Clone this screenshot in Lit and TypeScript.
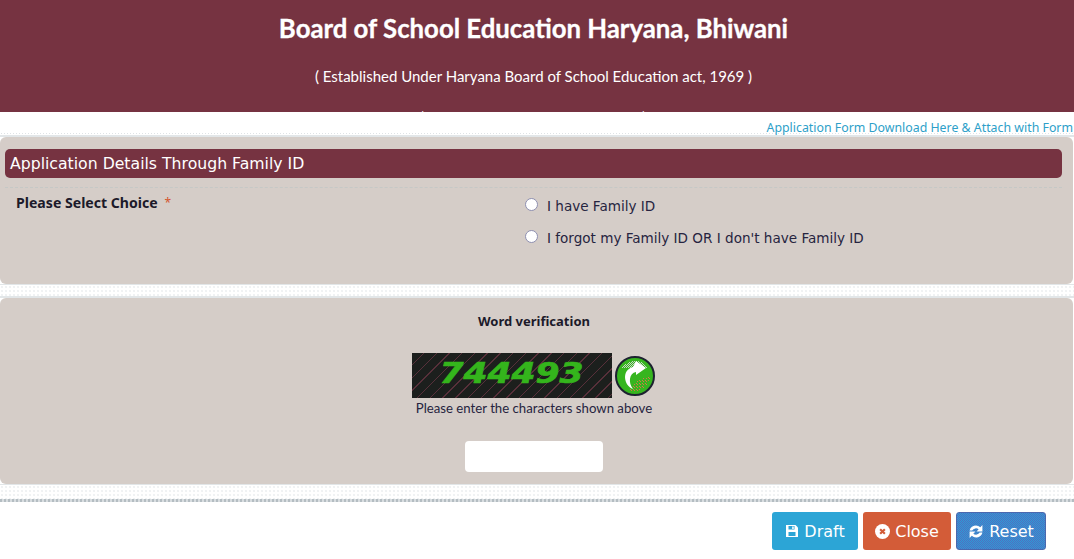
import { LitElement, html, css } from "lit";
import { customElement } from "lit/decorators.js";

@customElement("app-root")
export class AppRoot extends LitElement {
  static styles = css`
    :host { display: block; width: 1074px; height: 559px; overflow: hidden; background: #fff; font-family: "DejaVu Sans", sans-serif; color: #262440; }
    .hero { height: 112px; overflow: hidden; background: #763341; color: #fff; text-align: center; font-family: "Lato", "Noto Sans", sans-serif; padding-right: 7px; box-sizing: border-box; }
    .hero h1 { margin: 0; padding-top: 12px; font-size: 25.75px; line-height: 32px; font-weight: 700; -webkit-text-stroke: 0.3px #fff; }
    .hero p { margin: 0; padding-top: 22px; font-size: 15px; line-height: 20px; }
    .hero p + p { padding-top: 21px; letter-spacing: 0.9px; }
    .link { height: 25px; box-sizing: border-box; padding: 6px 1px 0 0; text-align: right; font-family: "Noto Sans", sans-serif; font-size: 12.35px; line-height: 20px; color: #2e9fc9;
      background-color: #fff; background-image: radial-gradient(circle, #dfe3e6 0.8px, transparent 1px); background-size: 3px 3px; background-repeat: repeat-x; background-position: 0 bottom; border-bottom: 2px solid #e2e6e8; }
    .panel { margin: 0 1px 0 0; background: #d5cdc8; border-radius: 6px; }
    .first { height: 147px; padding: 12px 11px 0 5px; box-sizing: border-box; }
    .title { height: 29px; background: #763341; border-radius: 5px; color: #fff; font-size: 15.7px; line-height: 29px; padding-left: 5px; }
    .rule { border-top: 1px dashed #c5c8c6; margin-top: 9px; }
    .row { display: grid; grid-template-columns: 509px 1fr; padding: 7px 0 0 11px; }
    .lbl { font-family: "Noto Sans", sans-serif; font-size: 14.1px; font-weight: 700; color: #1c1a2a; line-height: 17px; margin-top: -1px; }
    .lbl span { color: #d4562f; margin-left: 3px; font-weight: 400; font-size: 12px; vertical-align: 1px; }
    .opts { display: flex; flex-direction: column; gap: 15px; padding-top: 3px; }
    .opt { display: flex; align-items: center; gap: 9px; font-size: 13.55px; line-height: 17px; }
    .radio { width: 13px; height: 13px; border-radius: 50%; background: #fff; border: 1px solid #8e8fb0; box-sizing: border-box; margin-top: -4px; }
    .strip { height: 14px; background-color: #fff; background-image: radial-gradient(circle, #dfe3e6 0.6px, transparent 0.8px); background-size: 4px 4px; border-top: 1px solid #e2e6e8; border-bottom: 2px solid #e2e6e8; box-sizing: border-box; }
    .second { height: 186px; display: flex; flex-direction: column; align-items: center; box-sizing: border-box; padding: 15px 5px 0 0; }
    .wv { font-family: "Noto Sans", sans-serif; font-size: 13px; font-weight: 700; color: #1c1a2a; line-height: 17px; }
    .cap { display: flex; align-items: center; gap: 3px; margin: 23px 2px 0 0; }
    .img { width: 200px; height: 45px; display: flex; justify-content: center; background-color: #1c1f1d; background-image: repeating-linear-gradient(135deg, transparent 0 8px, #57303a 8px 9px); color: #34b51c; font-weight: 700; font-style: italic; font-size: 29px; line-height: 41px; -webkit-text-stroke: 0.7px #34b51c; }
    .img span { display: block; transform: scaleX(1.19); }
    .hint { font-family: "Lato", "Noto Sans", sans-serif; font-size: 13.2px; line-height: 16px; margin-top: 2px; }
    .input { width: 138px; height: 31px; margin-top: 25px; background: #fff; border-radius: 4px; }
    .strip2 { height: 15px; border-bottom: 0; }
    .strip2b { height: 3px; background: repeating-linear-gradient(90deg, #b4bdc2 0 2px, #d8dde0 2px 4px); }
    .foot { display: flex; justify-content: flex-end; gap: 5px; padding: 10px 28px 0 0; }
    .btn { height: 38px; box-sizing: border-box; display: flex; align-items: center; justify-content: center; gap: 5px; color: #fff; border-radius: 3px; font-size: 16px; }
    .draft { width: 86px; background: #2ca5d6; }
    .close { width: 88px; background: #d35c38; }
    .reset { width: 90px; background: repeating-conic-gradient(#2f9ad6 0 25%, #4f70c0 0 50%) 0 0 / 2px 2px; border: 1px solid #4a68ae; }
    svg { display: block; }
  `;
  render() {
    return html`
      <header class="hero">
        <h1>Board of School Education Haryana, Bhiwani</h1>
        <p>( Established Under Haryana Board of School Education act, 1969 )</p>
        <p>( An ISO 9001:2015 Certified )</p>
      </header>
      <div class="link">Application Form Download Here &amp; Attach with Form</div>
      <section class="panel first">
        <div class="title">Application Details Through Family ID</div>
        <div class="rule"></div>
        <div class="row">
          <div class="lbl">Please Select Choice <span>*</span></div>
          <div class="opts">
            <div class="opt"><i class="radio"></i>I have Family ID</div>
            <div class="opt"><i class="radio"></i>I forgot my Family ID OR I don't have Family ID</div>
          </div>
        </div>
      </section>
      <div class="strip"></div>
      <section class="panel second">
        <div class="wv">Word verification</div>
        <div class="cap">
          <div class="img"><span>744493</span></div>
          <svg width="40" height="40" viewBox="0 0 40 40" shape-rendering="crispEdges">
            <defs>
              <pattern id="dots" width="3" height="3" patternUnits="userSpaceOnUse"><rect width="1" height="1" fill="#d8744a"/><rect x="1" y="1" width="1" height="1" fill="#d8744a"/></pattern>
              <pattern id="grey" width="2" height="2" patternUnits="userSpaceOnUse"><rect width="1" height="1" fill="#c4d2c4"/><rect x="1" y="1" width="1" height="1" fill="#c4d2c4"/></pattern>
            </defs>
            <circle cx="20" cy="20" r="19" fill="#36b51f" stroke="#1d2230" stroke-width="2" shape-rendering="auto"/>
            <path d="M7 12a15.500 15.500 0 0 1 26 0z" fill="url(#grey)"/>
            <path d="M14 34a15.500 15.500 0 0 0 21-14l-9 3-7 5z" fill="url(#dots)"/>
            <path d="M18 33C9 30 6 14 18 11L21 5L31 12L21 19V16C14 17 13 27 18 33z" fill="#fff" shape-rendering="auto"/>
          </svg>
        </div>
        <div class="hint">Please enter the characters shown above</div>
        <div class="input"></div>
      </section>
      <div class="strip strip2"></div>
      <div class="strip2b"></div>
      <footer class="foot">
        <div class="btn draft">
          <svg width="14" height="14" viewBox="0 0 14 14"><path d="M1 1h9.500L13 3.500V13H1z" fill="#fff"/><path d="M3.500 2h6v3.500h-6zM3.500 8h7v4h-7z" fill="#2ca5d6"/><path d="M7.200 2.500h1.500v2.500H7.200z" fill="#fff"/></svg>Draft
        </div>
        <div class="btn close">
          <svg width="15" height="15" viewBox="0 0 14 14"><circle cx="7" cy="7" r="7" fill="#fff"/><path d="M4.800 4.800l4.400 4.400M9.200 4.800l-4.400 4.400" stroke="#d35c38" stroke-width="2"/></svg>Close
        </div>
        <div class="btn reset">
          <svg width="16" height="15" viewBox="0 0 15 14"><path d="M1.500 6a6 6 0 0 1 10-3L13.500 1V7H8l2-2a4 4 0 0 0-6 1z" fill="#fff"/><path d="M13.500 8a6 6 0 0 1-10 3L1.500 13V7H7l-2 2a4 4 0 0 0 6-1z" fill="#fff"/></svg>Reset
        </div>
      </footer>
    `;
  }
}
